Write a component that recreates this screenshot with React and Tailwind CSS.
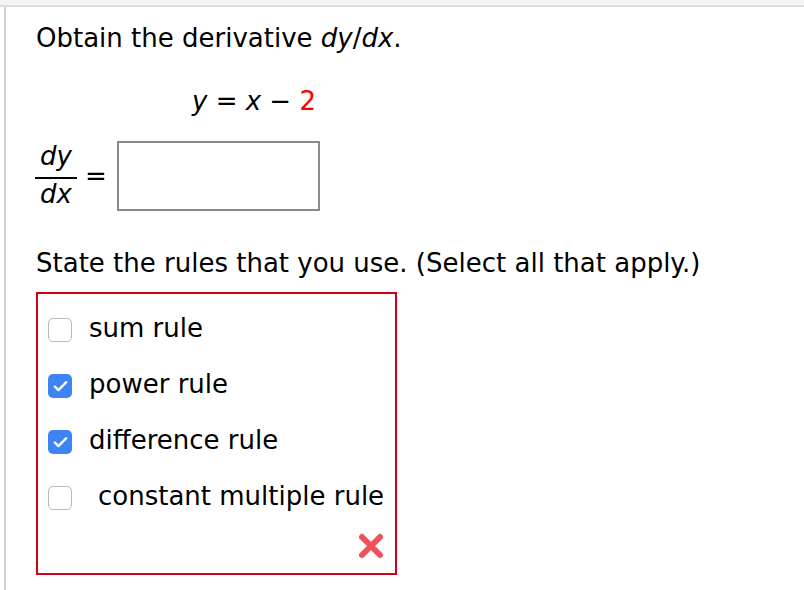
import { Check } from "lucide-react";

const font = { fontFamily: '"DejaVu Sans", Verdana, sans-serif' };

function Box({ checked }) {
  if (checked) {
    return (
      <span className="flex h-[24px] w-[24px] shrink-0 items-center justify-center rounded-[5px] bg-[#3d85f4]">
        <Check className="h-[17px] w-[17px] text-white" strokeWidth={3.4} />
      </span>
    );
  }
  return (
    <span className="h-[24px] w-[24px] shrink-0 rounded-[5px] border border-[#b8b8b8] bg-white" />
  );
}

const rules = [
  { label: "sum rule", checked: false },
  { label: "power rule", checked: true },
  { label: "difference rule", checked: true },
  { label: "constant multiple rule", checked: false, pad: true },
];

export default function App() {
  return (
    <div className="flex h-[590px] w-[804px] flex-col overflow-hidden bg-white text-[26px] text-black" style={font}>
      <div className="h-[7px] shrink-0 border-b-2 border-[#dddddd] bg-[#f5f5f5]" />
      <div className="ml-[4px] flex-1 border-l-2 border-[#d0d0d0] pl-[30px]">
        <p className="mt-[16px] leading-[30px]">
          Obtain the derivative <i>dy</i>/<i>dx</i>.
        </p>
        <p className="mt-[33px] ml-[156px] leading-[30px]">
          <i>y</i> = <i>x</i> − <span className="text-[#ff0000]">2</span>
        </p>
        <div className="mt-[25px] flex h-[70px] items-center">
          <div className="-ml-[1px] flex flex-col items-center self-start">
            <span className="pb-[6px] leading-[30px]"><i>dy</i></span>
            <span className="h-[2px] w-[42px] bg-black" />
            <span className="leading-[30px]"><i>dx</i></span>
          </div>
          <span className="ml-[8px] leading-[30px]">=</span>
          <div className="ml-[10px] h-[70px] w-[203px] border-2 border-[#8a8a8a] bg-white" />
        </div>
        <p className="mt-[37px] leading-[30px]">
          State the rules that you use. (Select all that apply.)
        </p>
        <div className="relative mt-[14px] h-[283px] w-[361px] border-2 border-[#d0021b] pt-[24px] pl-[10px]">
          {rules.map((r) => (
            <div key={r.label} className="flex h-[56px] items-start">
              <Box checked={r.checked} />
              <span className={`-mt-[5px] leading-[30px] ${r.pad ? "ml-[26px]" : "ml-[17px]"}`}>{r.label}</span>
            </div>
          ))}
          <svg className="absolute right-[10px] bottom-[13px] h-[28px] w-[28px]" viewBox="0 0 28 28">
            <path d="M5 5 L23 23 M23 5 L5 23" stroke="#f0505a" strokeWidth="6" strokeLinecap="round" fill="none" />
          </svg>
        </div>
      </div>
    </div>
  );
}
